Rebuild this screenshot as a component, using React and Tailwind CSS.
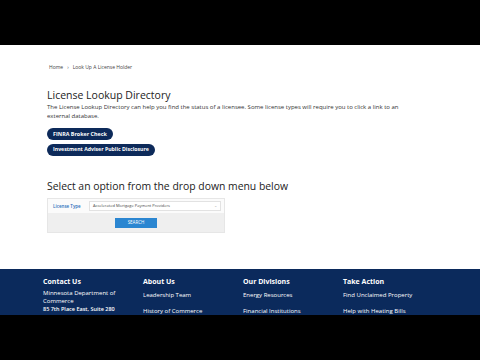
export default function App() {
  const font = { fontFamily: '"Open Sans", "Noto Sans", sans-serif' };
  return (
    <div className="w-[480px] h-[360px] overflow-hidden bg-black flex flex-col" style={font}>
      <div className="h-[45px] bg-black shrink-0" />
      <div className="h-[224px] bg-white shrink-0 px-[47px]">
        <div className="pt-[19px] flex items-center text-[5px] leading-[6px] text-[#444] pl-[2px]">
          <span>Home</span>
          <span className="mx-[4px]">›</span>
          <span>Look Up A License Holder</span>
        </div>
        <h1 className="mt-[17px] text-[10.5px] leading-[16px] text-[#222]">License Lookup Directory</h1>
        <p className="text-[6px] leading-[9px] text-[#333] w-[372px]">
          The License Lookup Directory can help you find the status of a licensee. Some license types will require you to click a link to an external database.
        </p>
        <div className="mt-[7px] flex flex-col items-start gap-[4px] pl-[0px]">
          <div className="h-[12px] px-[6px] rounded-full bg-[#0d2a5a] text-white text-[5.4px] font-bold flex items-center">FINRA Broker Check</div>
          <div className="h-[12px] px-[6px] rounded-full bg-[#0d2a5a] text-white text-[5.2px] font-bold flex items-center">Investment Adviser Public Disclosure</div>
        </div>
        <h2 className="mt-[22px] text-[10.4px] leading-[16px] text-[#222]">Select an option from the drop down menu below</h2>
        <div className="mt-[4px] w-[178px] border border-[#e6e6e6] bg-[#efefef]">
          <div className="h-[14px] bg-[#fbfbfb] flex items-center pl-[5px]">
            <span className="text-[4.5px] text-[#2a6ebb] font-semibold w-[36px]">License Type</span>
            <div className="w-[132px] h-[10px] bg-white border border-[#e2e2e2] flex items-center justify-between px-[3px]">
              <span className="text-[4px] text-[#444]">Accelerated Mortgage Payment Providers</span>
              <span className="text-[4px] text-[#aaa]">⌄</span>
            </div>
          </div>
          <div className="h-[19px] flex items-center justify-center">
            <div className="w-[42px] h-[10px] bg-[#2b86d1] text-white text-[4.5px] flex items-center justify-center">SEARCH</div>
          </div>
        </div>
      </div>
      <div className="h-[46px] bg-[#0b2a5c] shrink-0 pl-[43px] pt-[9px] flex text-white">
        <div className="w-[100px]">
          <div className="text-[7px] leading-[8px] font-bold">Contact Us</div>
          <div className="mt-[3px] text-[6px] leading-[8px] w-[80px]">Minnesota Department of Commerce</div>
          <div className="text-[5.5px] leading-[8px] font-semibold">85 7th Place East, Suite 280</div>
        </div>
        <div className="w-[100px]">
          <div className="text-[7px] leading-[8px] font-bold">About Us</div>
          <div className="mt-[5px] text-[6px] leading-[8px]">Leadership Team</div>
          <div className="mt-[8px] text-[6px] leading-[8px]">History of Commerce</div>
        </div>
        <div className="w-[100px]">
          <div className="text-[7px] leading-[8px] font-bold">Our Divisions</div>
          <div className="mt-[5px] text-[6px] leading-[8px]">Energy Resources</div>
          <div className="mt-[8px] text-[6px] leading-[8px]">Financial Institutions</div>
        </div>
        <div className="w-[100px]">
          <div className="text-[7px] leading-[8px] font-bold">Take Action</div>
          <div className="mt-[5px] text-[6px] leading-[8px]">Find Unclaimed Property</div>
          <div className="mt-[8px] text-[6px] leading-[8px]">Help with Heating Bills</div>
        </div>
      </div>
      <div className="flex-1 bg-black" />
    </div>
  );
}
